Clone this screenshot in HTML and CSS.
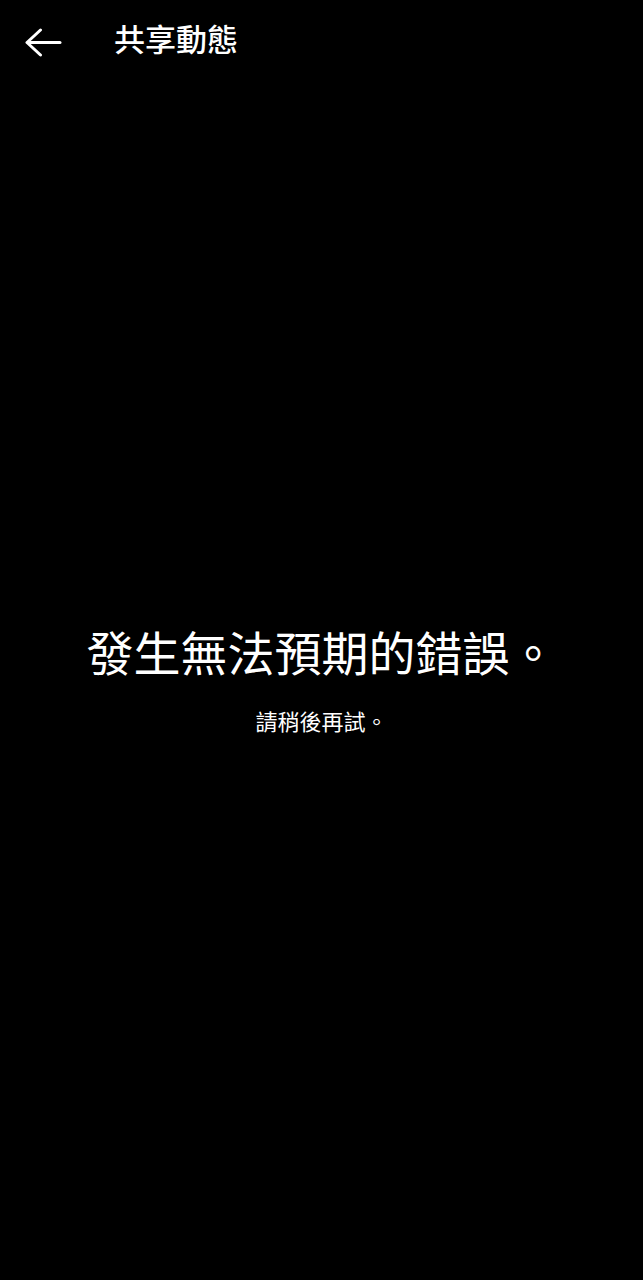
FILE: index.html
```html
<!DOCTYPE html>
<html lang="zh-Hant">
<head>
<meta charset="utf-8">
<link rel="stylesheet" href="styles.css">
</head>
<body>
<div class="page">
  <header class="topbar">
    <span class="back" aria-label="返回">
      <svg width="37" height="29" viewBox="0 0 37 29" fill="none" stroke="#fff" stroke-width="3" stroke-linecap="round" stroke-linejoin="round">
        <path d="M35 14.5H3"/>
        <path d="M15.5 2L2 14.5 15.5 27"/>
      </svg>
    </span>
    <h1 class="title">共享動態</h1>
  </header>
  <main class="content">
    <p class="error">發生無法預期的錯誤。</p>
    <p class="hint">請稍後再試。</p>
  </main>
</div>
</body>
</html>
```
FILE: styles.css
```css
html, body {
  margin: 0;
  padding: 0;
  background: #000;
}
body {
  font-family: "Noto Sans CJK TC", "Noto Sans", sans-serif;
  color: #fff;
}
.page {
  width: 643px;
  height: 1280px;
  display: flex;
  flex-direction: column;
}
.topbar {
  height: 80px;
  display: flex;
  align-items: center;
  padding-left: 25px;
  box-sizing: border-box;
}
.back {
  display: flex;
  width: 37px;
  height: 29px;
  margin-top: 4px;
  margin-right: 52px;
}
.title {
  margin: 0 0 4px;
  font-size: 31px;
  font-weight: 500;
  line-height: 36px;
}
.content {
  display: flex;
  flex-direction: column;
  align-items: center;
  padding-top: 543px;
}
.error {
  margin: 0;
  font-size: 47px;
  line-height: 56px;
  font-weight: 400;
}
.hint {
  margin: 27px 0 0;
  font-size: 22px;
  line-height: 28px;
}
```
